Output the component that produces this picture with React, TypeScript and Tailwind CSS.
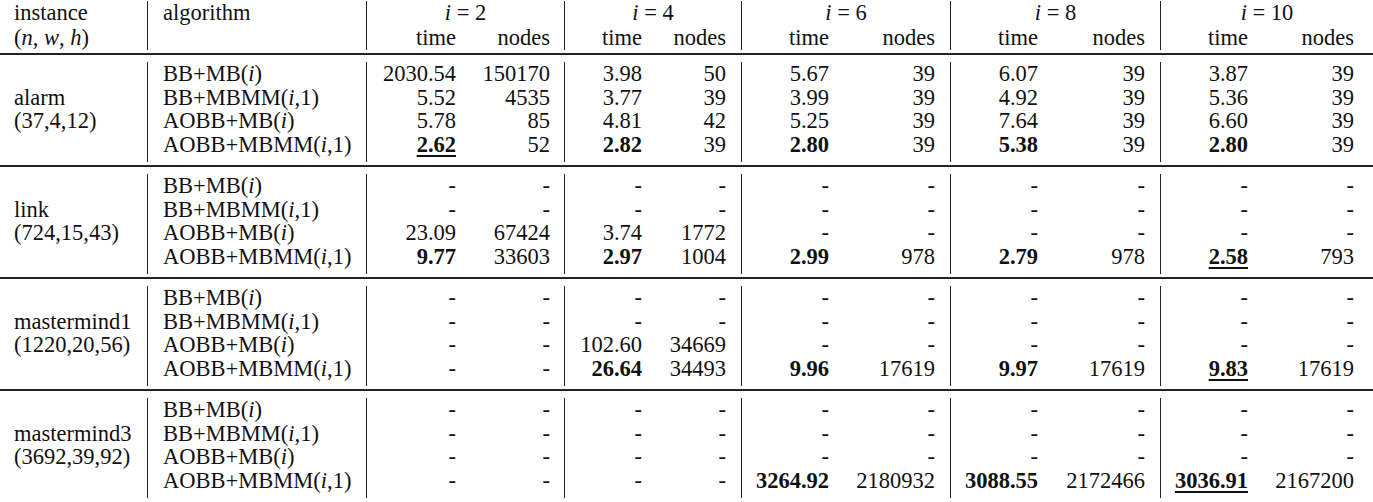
import React from "react";

type Cell = string;

const groupCols = [
  { label: "2", timeW: "w-[89px]", pr: "pr-[14px]", colW: "w-[198px]" },
  { label: "4", timeW: "w-[77px]", pr: "pr-[15px]", colW: "w-[177px]" },
  { label: "6", timeW: "w-[87px]", pr: "pr-[15px]", colW: "w-[209px]" },
  { label: "8", timeW: "w-[87px]", pr: "pr-[15px]", colW: "w-[210px]" },
  { label: "10", timeW: "w-[87px]", pr: "pr-[19px]", colW: "w-[213px]" },
];

const D: [Cell, Cell] = ["-", "-"];

const data: {
  name: string;
  params: string;
  rows: [Cell, Cell][][];
}[] = [
  {
    name: "alarm",
    params: "(37,4,12)",
    rows: [
      [["2030.54", "150170"], ["3.98", "50"], ["5.67", "39"], ["6.07", "39"], ["3.87", "39"]],
      [["5.52", "4535"], ["3.77", "39"], ["3.99", "39"], ["4.92", "39"], ["5.36", "39"]],
      [["5.78", "85"], ["4.81", "42"], ["5.25", "39"], ["7.64", "39"], ["6.60", "39"]],
      [["u:2.62", "52"], ["b:2.82", "39"], ["b:2.80", "39"], ["b:5.38", "39"], ["b:2.80", "39"]],
    ],
  },
  {
    name: "link",
    params: "(724,15,43)",
    rows: [
      [D, D, D, D, D],
      [D, D, D, D, D],
      [["23.09", "67424"], ["3.74", "1772"], D, D, D],
      [["b:9.77", "33603"], ["b:2.97", "1004"], ["b:2.99", "978"], ["b:2.79", "978"], ["u:2.58", "793"]],
    ],
  },
  {
    name: "mastermind1",
    params: "(1220,20,56)",
    rows: [
      [D, D, D, D, D],
      [D, D, D, D, D],
      [D, ["102.60", "34669"], D, D, D],
      [D, ["b:26.64", "34493"], ["b:9.96", "17619"], ["b:9.97", "17619"], ["u:9.83", "17619"]],
    ],
  },
  {
    name: "mastermind3",
    params: "(3692,39,92)",
    rows: [
      [D, D, D, D, D],
      [D, D, D, D, D],
      [D, D, D, D, D],
      [D, D, ["b:3264.92", "2180932"], ["b:3088.55", "2172466"], ["u:3036.91", "2167200"]],
    ],
  },
];

const algos: React.ReactNode[] = [
  <>BB+MB(<i>i</i>)</>,
  <>BB+MBMM(<i>i</i>,1)</>,
  <>AOBB+MB(<i>i</i>)</>,
  <>AOBB+MBMM(<i>i</i>,1)</>,
];

function Val({ v }: { v: string }) {
  if (v.startsWith("u:")) {
    return (
      <span className="font-bold underline decoration-[1.5px] underline-offset-[3px]">
        {v.slice(2)}
      </span>
    );
  }
  if (v.startsWith("b:")) {
    return <span className="font-bold">{v.slice(2)}</span>;
  }
  return <span>{v}</span>;
}

function Header() {
  return (
    <div className="flex pt-[1px] pb-[3px] border-b-2 border-[#222]">
      <div className="w-[147px] shrink-0 pl-[14px]">
        <div className="leading-[24.5px]">instance</div>
        <div className="leading-[24.5px]">
          (<i>n</i>, <i>w</i>, <i>h</i>)
        </div>
      </div>
      <div className="w-[219px] shrink-0 border-l border-[#222] pl-[15px]">
        <div className="leading-[24.5px]">algorithm</div>
        <div className="leading-[24.5px]">&nbsp;</div>
      </div>
      {groupCols.map((g) => (
        <div key={g.label} className={`${g.colW} shrink-0 border-l border-[#222]`}>
          <div className="leading-[24.5px] text-center">
            <i>i</i>&nbsp;=&nbsp;{g.label}
          </div>
          <div className={`flex leading-[24.5px] ${g.pr}`}>
            <div className={`${g.timeW} shrink-0 text-right`}>time</div>
            <div className="flex-1 text-right">nodes</div>
          </div>
        </div>
      ))}
    </div>
  );
}

function Group({
  g,
  last,
}: {
  g: (typeof data)[number];
  last: boolean;
}) {
  return (
    <div className={`pt-[7px] pb-[3px] ${last ? "" : "border-b-2 border-[#222]"}`}>
      <div className="flex">
        <div className="w-[147px] shrink-0 pl-[14px] pb-[6px]">
          <div className="leading-[23.5px]">&nbsp;</div>
          <div className="leading-[23.5px]">{g.name}</div>
          <div className="leading-[23.5px]">{g.params}</div>
          <div className="leading-[23.5px]">&nbsp;</div>
        </div>
        <div className="w-[219px] shrink-0 border-l border-[#222] pl-[15px] pb-[6px]">
          {algos.map((a, i) => (
            <div key={i} className="leading-[23.5px] whitespace-nowrap">
              {a}
            </div>
          ))}
        </div>
        {groupCols.map((c, ci) => (
          <div key={c.label} className={`${c.colW} shrink-0 border-l border-[#222] pb-[6px]`}>
            {g.rows.map((r, ri) => (
              <div key={ri} className={`flex leading-[23.5px] ${c.pr}`}>
                <div className={`${c.timeW} shrink-0 text-right`}>
                  <Val v={r[ci][0]} />
                </div>
                <div className="flex-1 text-right">
                  <Val v={r[ci][1]} />
                </div>
              </div>
            ))}
          </div>
        ))}
      </div>
    </div>
  );
}

export default function App() {
  return (
    <div className="w-[1373px] h-[502px] overflow-hidden bg-white text-[#111] font-[family-name:Liberation_Serif,serif] text-[22.5px]">
      <Header />
      {data.map((g, i) => (
        <Group key={g.name} g={g} last={i === data.length - 1} />
      ))}
    </div>
  );
}
